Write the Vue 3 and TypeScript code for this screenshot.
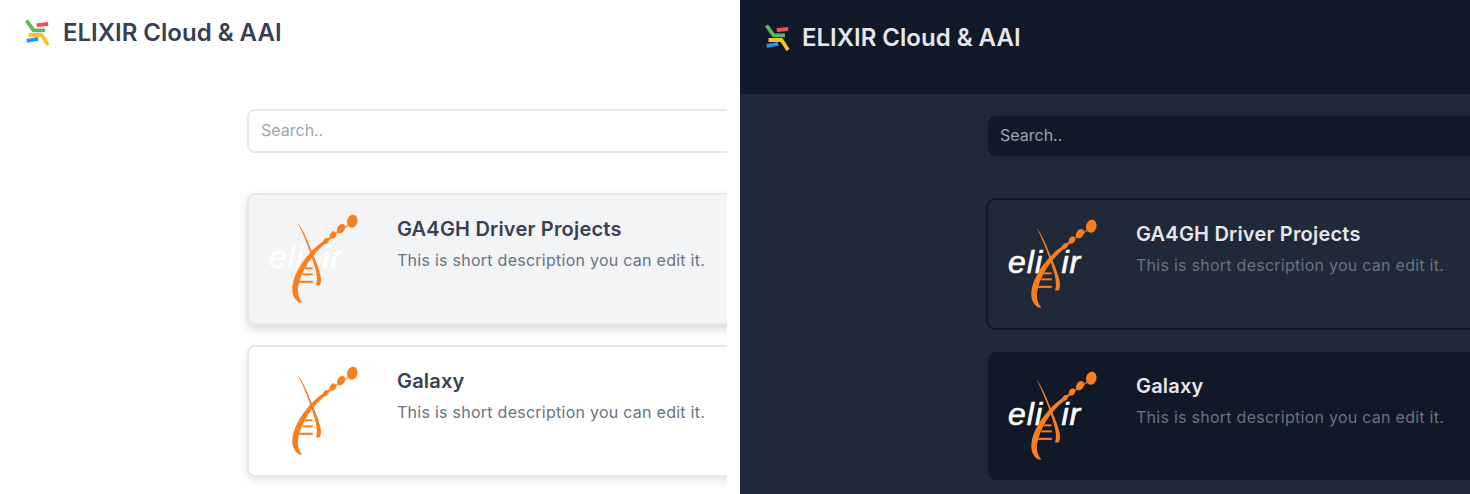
<script setup lang="ts">
interface Card {
  title: string;
  active: boolean;
}

const panes = ["light", "dark"];
const cards: Card[] = [
  { title: "GA4GH Driver Projects", active: true },
  { title: "Galaxy", active: false },
];
const description = "This is short description you can edit it.";
</script>

<template>
  <div class="screen">
    <section v-for="pane in panes" :key="pane" class="pane" :class="pane">
      <header class="topbar">
        <svg class="brand-icon" width="28" height="28" viewBox="0 0 28 28" fill="none" stroke-width="3.8">
          <path d="M2.5 2.5 L9.6 12.4 H21" stroke="#5cb85c" stroke-linejoin="round" />
          <path d="M12.7 7.2 L24.2 6" stroke="#ef5350" />
          <path d="M4.5 17 H17.6 L24 27" stroke="#fbc02d" stroke-linejoin="round" />
          <path d="M2.6 22.8 L14.2 20.8" stroke="#2196f3" />
        </svg>
        <span class="brand">ELIXIR Cloud &amp; AAI</span>
      </header>

      <main class="content">
        <input class="search" type="text" placeholder="Search.." />
        <div class="list">
          <article v-for="card in cards" :key="card.title" class="card" :class="{ active: card.active }">
            <svg class="logo" width="120" height="100" viewBox="0 0 120 100">
              <text class="logo-text" x="6" y="59">eli</text>
              <text class="logo-text" x="59.5" y="59">ir</text>
              <g fill="#f97f1e">
                <ellipse cx="89.3" cy="12.2" rx="5.2" ry="6.6" transform="rotate(15 89.3 12.2)" />
                <ellipse cx="78" cy="19.7" rx="3.6" ry="5" transform="rotate(35 78 19.7)" />
                <ellipse cx="70" cy="26" rx="2.9" ry="3.8" transform="rotate(35 70 26)" />
                <ellipse cx="63" cy="32" rx="2.3" ry="3" transform="rotate(40 63 32)" />
                <!-- thin strand, top left to lower right -->
                <path d="M34.2 13 C39 19 44 30 47 38 C51 48 55 56 57.4 66 C58.4 71 58.2 74 56.6 76.4 L53 76.6 C54.6 72 54 66 52.4 60 C49.6 50 46 40 42.6 31.6 C40 25 37 18 34.2 13 Z" />
                <!-- thick strand, dots down to the bottom tip -->
                <path d="M85 15.8 L85.6 16.8 L70 27 L64 33.6 C57 38.6 50 46 44.6 54.6 C39.6 62.6 36 71 35 79 C34.4 85.6 36.4 90.6 39.6 93.4 L36.4 93.6 C31 90 28.6 84.4 29.4 77.4 C30.6 68 35.6 58.8 41.6 50.6 C47 43.4 54 36 62 31 L70 25.8 Z" />
                <rect x="42" y="58.4" width="7.6" height="1.9" />
                <rect x="39.4" y="64.4" width="10.4" height="1.9" />
                <rect x="35.4" y="71.8" width="14.4" height="2.1" />
              </g>
            </svg>
            <div class="card-body">
              <h2>{{ card.title }}</h2>
              <p>{{ description }}</p>
            </div>
          </article>
        </div>
      </main>
    </section>
  </div>
</template>

<style scoped>
.screen {
  display: flex;
  gap: 13px;
  width: 1470px;
  height: 494px;
  overflow: hidden;
  background: #fff;
  font-family: Inter, "Noto Sans", sans-serif;
}
.pane {
  height: 494px;
  overflow: hidden;
}
.light {
  width: 727px;
  flex: none;
  background: #fff;
}
.dark {
  width: 730px;
  flex: none;
  background: #1f2937;
}
.topbar {
  display: flex;
  align-items: center;
  gap: 11px;
  height: 64px;
  padding-left: 24px;
  box-sizing: border-box;
}
.dark .topbar {
  height: 94px;
  gap: 10px;
  padding-bottom: 20px;
  background: #111827;
}
.brand-icon {
  flex: none;
}
.brand {
  padding-top: 1px;
  font-size: 24px;
  font-weight: 600;
  white-space: nowrap;
  color: #374151;
}
.dark .brand {
  color: #e5e7eb;
}
.content {
  width: 900px;
  padding: 45px 0 0 247px;
}
.dark .content {
  padding: 22px 0 0 248px;
}
.search {
  display: block;
  width: 100%;
  height: 44px;
  padding: 0 12px 2px;
  box-sizing: border-box;
  border: 2px solid #e5e7eb;
  border-radius: 8px;
  outline: none;
  background: #fff;
  font-family: inherit;
  font-size: 16px;
}
.search::placeholder {
  color: #9ca3af;
  opacity: 1;
}
.dark .search {
  height: 40px;
  border: none;
  background: #111827;
}
.list {
  display: flex;
  flex-direction: column;
  gap: 20px;
  margin-top: 40px;
}
.dark .list {
  gap: 24px;
  margin-top: 44px;
}
.card {
  display: flex;
  gap: 14px;
  height: 132px;
  padding: 14px;
  box-sizing: border-box;
  border: 2px solid #e5e7eb;
  border-radius: 8px;
  background: #fff;
  box-shadow: 0 4px 8px rgba(0, 0, 0, 0.1);
}
.card.active {
  background: #f3f4f6;
  box-shadow: 0 4px 8px rgba(0, 0, 0, 0.16);
}
.dark .card {
  height: 128px;
  border: none;
  background: #111827;
  box-shadow: none;
}
.dark .card.active {
  background: #1f2937;
  outline: 2px solid #111827;
}
.logo {
  flex: none;
}
.logo-text {
  fill: #fff;
  stroke: #fff;
  stroke-width: 0.6;
  font-family: "Liberation Sans", sans-serif;
  font-size: 32px;
  font-style: italic;
  letter-spacing: 1px;
}
.card-body {
  padding-top: 6px;
}
h2 {
  margin: 0;
  font-size: 20px;
  line-height: 28px;
  font-weight: 600;
  letter-spacing: 0.2px;
  color: #374151;
}
.dark h2 {
  color: #e5e7eb;
}
p {
  margin: 5px 0 0;
  font-size: 16px;
  line-height: 24px;
  letter-spacing: 0.26px;
  color: #6b7280;
}
</style>
